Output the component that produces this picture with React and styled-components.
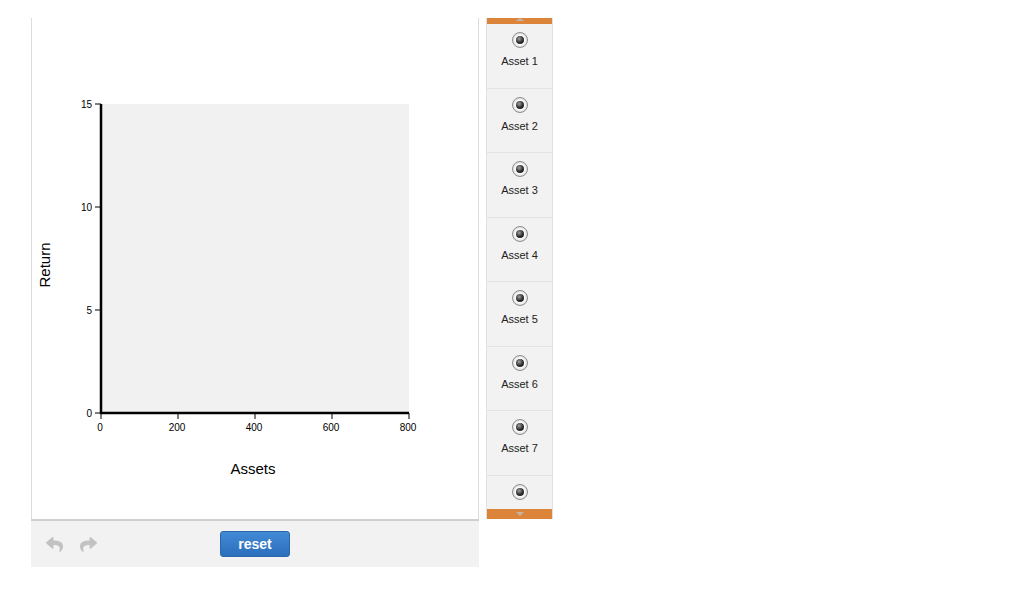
import styled, { createGlobalStyle } from "styled-components";
import { FaReply, FaShare } from "react-icons/fa";

const GlobalStyle = createGlobalStyle`
  body {
    margin: 0;
    background: #fff;
    font-family: "Liberation Sans", Arial, sans-serif;
  }
`;

const Page = styled.div`
  display: flex;
  align-items: flex-start;
  gap: 7px;
  padding: 18px 0 0 31px;
`;

const LeftPanel = styled.div`
  width: 448px;
  display: flex;
  flex-direction: column;
`;

const ChartArea = styled.div`
  box-sizing: border-box;
  height: 501px;
  border-left: 1px solid #dcdcdc;
  border-right: 1px solid #dcdcdc;
  background: #fff;
`;

const Toolbar = styled.div`
  box-sizing: border-box;
  height: 48px;
  background: #f2f2f2;
  border-top: 2px solid #cfcfcf;
  display: flex;
  align-items: center;
  padding-left: 14px;
`;

const IconButton = styled.span`
  display: flex;
  width: 18px;
  justify-content: center;
  margin-right: 16px;
  color: #c2c2c2;
  font-size: 17px;
`;

const ResetButton = styled.button`
  margin-left: 107px;
  width: 70px;
  height: 26px;
  border: 1px solid #2b66a8;
  border-radius: 3px;
  background: linear-gradient(#4289d6, #2c6fbc);
  color: #fff;
  font-family: "Liberation Sans", Arial, sans-serif;
  font-weight: bold;
  font-size: 14px;
  padding: 0;
  cursor: pointer;
`;

const Palette = styled.div`
  box-sizing: border-box;
  width: 67px;
  height: 501px;
  border-left: 1px solid #e0e0e0;
  border-right: 1px solid #e0e0e0;
  display: flex;
  flex-direction: column;
`;

const ScrollBar = styled.div`
  height: ${(p) => p.$h}px;
  flex: none;
  background: #dc853a;
  display: flex;
  justify-content: center;
  align-items: ${(p) => (p.$down ? "center" : "flex-start")};
`;

const Arrow = styled.span`
  width: 0;
  height: 0;
  border-left: 4px solid transparent;
  border-right: 4px solid transparent;
  ${(p) =>
    p.$down
      ? "border-top: 4px solid #c7b3a2;"
      : "border-bottom: 3px solid #c7b3a2;"}
`;

const List = styled.div`
  flex: 1;
  overflow: hidden;
  background: #f2f2f2;
`;

const Item = styled.div`
  box-sizing: border-box;
  height: 64.5px;
  border-bottom: 1px solid #e3e3e3;
  display: flex;
  flex-direction: column;
  align-items: center;
  padding-top: 8px;
  gap: 7px;
`;

const Radio = styled.span`
  box-sizing: border-box;
  width: 16px;
  height: 16px;
  border-radius: 50%;
  border: 1px solid #8e8e8e;
  background: radial-gradient(circle, #ffffff 45%, #d8d8d8 75%, #b5b5b5 100%);
  display: flex;
  align-items: center;
  justify-content: center;

  &::after {
    content: "";
    width: 8px;
    height: 8px;
    border-radius: 50%;
    background: radial-gradient(circle at 40% 35%, #a0a0a0 0%, #2a2a2a 55%, #111 100%);
  }
`;

const Label = styled.span`
  font-size: 11px;
  color: #222;
`;

const yTicks = [0, 5, 10, 15];
const xTicks = [0, 200, 400, 600, 800];

function Chart() {
  const x0 = 69;
  const x1 = 377;
  const y0 = 395;
  const y1 = 86;
  const sx = (v) => x0 + ((x1 - x0) * v) / 800;
  const sy = (v) => y0 - ((y0 - y1) * v) / 15;
  return (
    <svg width="446" height="501" style={{ display: "block" }}>
      <rect x={x0} y={y1} width={x1 - x0} height={y0 - y1} fill="#f1f1f1" />
      <g fontFamily="Liberation Sans, Arial, sans-serif" fontSize="10" fill="#000">
        {yTicks.map((t) => (
          <g key={t}>
            <line x1={x0 - 6} x2={x0} y1={sy(t)} y2={sy(t)} stroke="#000" strokeWidth="1" />
            <text x={x0 - 9} y={sy(t) + 3.5} textAnchor="end">
              {t}
            </text>
          </g>
        ))}
        {xTicks.map((t) => (
          <g key={t}>
            <line x1={sx(t)} x2={sx(t)} y1={y0} y2={y0 + 6} stroke="#000" strokeWidth="1" />
            <text x={sx(t) - 1} y={y0 + 18} textAnchor="middle">
              {t}
            </text>
          </g>
        ))}
      </g>
      <line x1={x0} x2={x0} y1={y1} y2={y0 + 1} stroke="#000" strokeWidth="2.5" />
      <line x1={x0 - 1} x2={x1} y1={y0} y2={y0} stroke="#000" strokeWidth="2.5" />
      <text
        x="221"
        y="456"
        textAnchor="middle"
        fontFamily="Liberation Sans, Arial, sans-serif"
        fontSize="15"
      >
        Assets
      </text>
      <text
        transform="translate(18 247) rotate(-90)"
        textAnchor="middle"
        fontFamily="Liberation Sans, Arial, sans-serif"
        fontSize="15"
      >
        Return
      </text>
    </svg>
  );
}

const assets = [1, 2, 3, 4, 5, 6, 7, 8];

export default function App() {
  return (
    <>
      <GlobalStyle />
      <Page>
        <LeftPanel>
          <ChartArea>
            <Chart />
          </ChartArea>
          <Toolbar>
            <IconButton>
              <FaReply />
            </IconButton>
            <IconButton>
              <FaShare />
            </IconButton>
            <ResetButton>reset</ResetButton>
          </Toolbar>
        </LeftPanel>
        <Palette>
          <ScrollBar $h={6}>
            <Arrow />
          </ScrollBar>
          <List>
            {assets.map((n) => (
              <Item key={n}>
                <Radio />
                <Label>Asset {n}</Label>
              </Item>
            ))}
          </List>
          <ScrollBar $h={10} $down>
            <Arrow $down />
          </ScrollBar>
        </Palette>
      </Page>
    </>
  );
}
